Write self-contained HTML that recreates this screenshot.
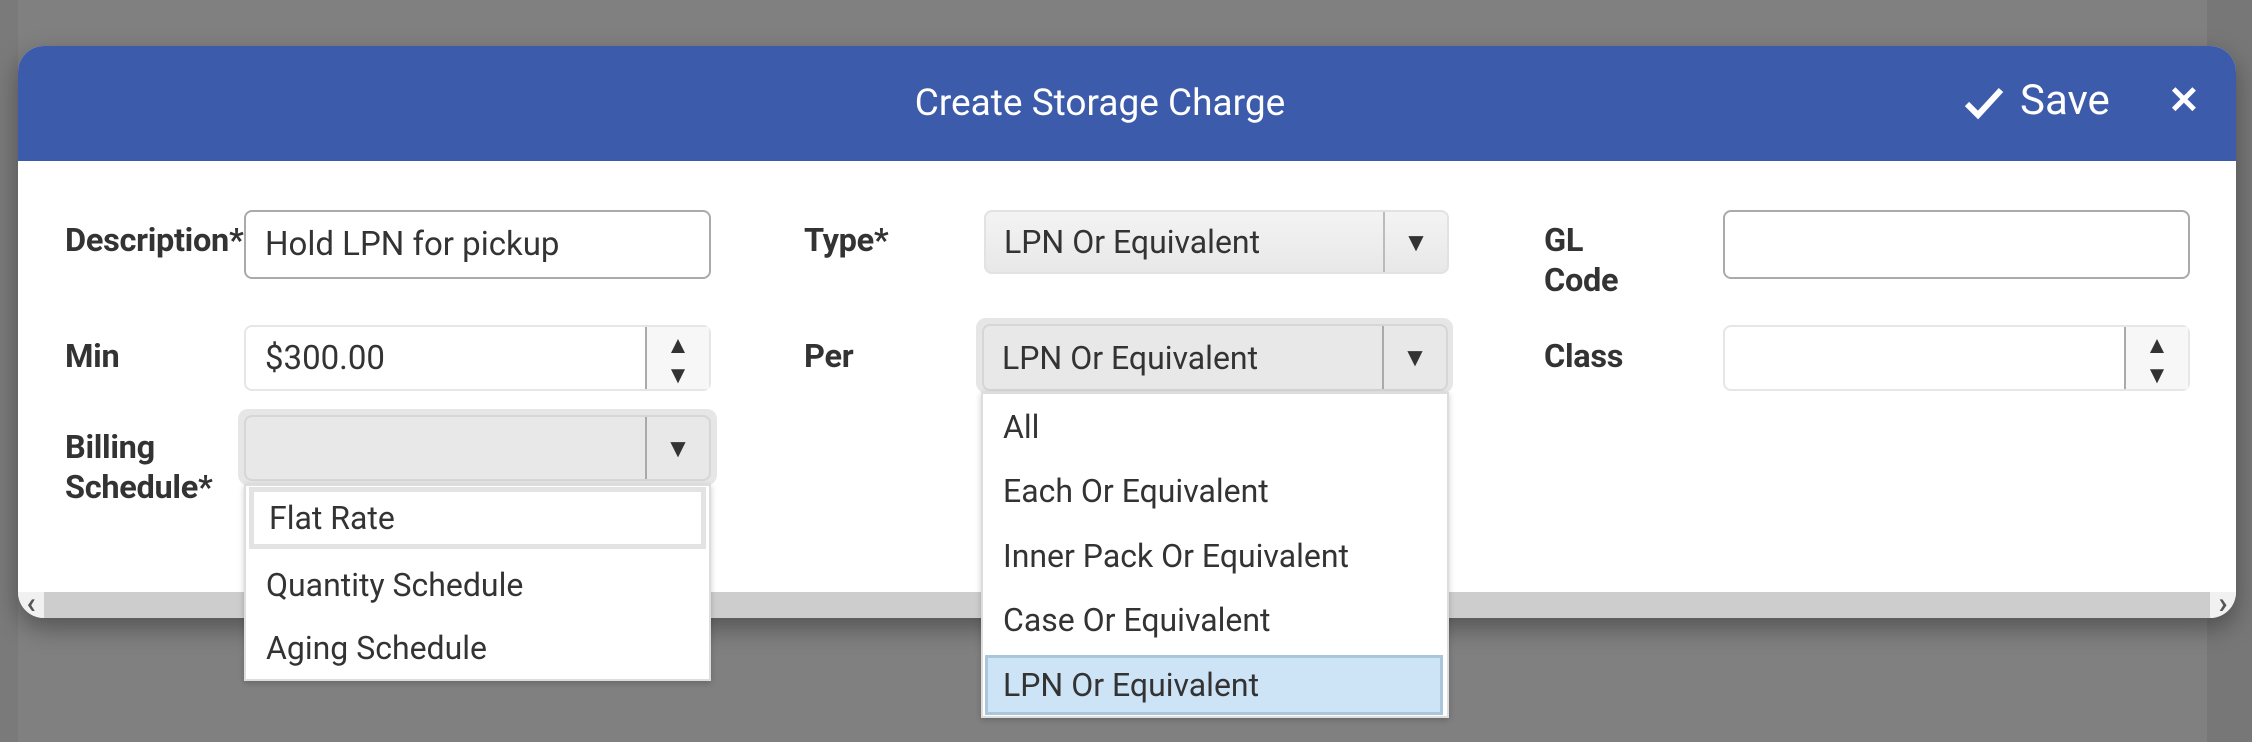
<!DOCTYPE html>
<html><head><meta charset="utf-8"><style>
*{box-sizing:border-box;margin:0;padding:0}
body{width:2252px;height:742px;overflow:hidden;background:#808080;font-family:"Roboto","Liberation Sans",sans-serif;color:#333;position:relative}
.abs{position:absolute}
.strip{left:0;top:0;width:18px;height:742px;background:#7a7a7a}
.rstrip{left:2207px;top:0;width:45px;height:742px;background:#777}
.modal{left:18px;top:46px;width:2218px;height:572px;background:#fff;border-radius:26px;overflow:hidden;box-shadow:0 10px 25px rgba(0,0,0,.35)}
.hdr{left:0;top:0;width:2218px;height:115px;background:#3d5bab;color:#fff}
.lbl{font-weight:bold;font-size:32.5px;color:#333;line-height:40px;letter-spacing:-0.3px}
.inp{border:2px solid #aaa;border-radius:8px;background:#fff;font-size:33px;color:#333;padding-left:19px;display:flex;align-items:center}
.sel{border:2px solid #e2e2e2;border-radius:8px;background:linear-gradient(#f3f3f3,#e8e8e8);font-size:32px;color:#333;padding-left:18px;display:flex;align-items:center}
.arr{position:absolute;right:0;top:0;bottom:0;width:64px;border-left:2px solid #aaa;display:flex;align-items:center;justify-content:center;font-size:26px;color:#333}
.spin{position:absolute;right:0;top:0;bottom:0;width:64px;border-left:2px solid #aaa;font-size:24px;color:#333;text-align:center;line-height:30px;padding-top:3px}
.item{position:absolute;left:0;right:0;height:64px;font-size:32px;color:#333;padding-left:20px;display:flex;align-items:center}
</style></head><body>
<div class="abs strip"></div>
<div class="abs rstrip"></div>
<div class="abs modal">
 <div class="abs hdr">
  <div class="abs" style="left:-27px;width:2218px;top:36px;text-align:center;font-size:37px">Create Storage Charge</div>
  <svg class="abs" style="left:1946px;top:40px" width="40" height="34" viewBox="0 0 40 34"><path d="M3 18 L14 29 L37 4" fill="none" stroke="#fff" stroke-width="6"/></svg>
  <div class="abs" style="left:2002px;top:30px;font-size:42px">Save</div>
  <div class="abs" style="left:2150px;top:32px;font-size:38px;font-weight:bold">✕</div>
 </div>
 <div class="abs lbl" style="left:47px;top:174px">Description*</div>
 <div class="abs lbl" style="left:786px;top:174px">Type*</div>
 <div class="abs lbl" style="left:1526px;top:174px">GL<br>Code</div>
 <div class="abs lbl" style="left:47px;top:290px">Min</div>
 <div class="abs lbl" style="left:786px;top:290px">Per</div>
 <div class="abs lbl" style="left:1526px;top:290px">Class</div>
 <div class="abs lbl" style="left:47px;top:381px">Billing<br>Schedule*</div>

 <div class="abs inp" style="left:226px;top:164px;width:467px;height:69px">Hold LPN for pickup</div>
 <div class="abs sel" style="left:966px;top:164px;width:465px;height:64px">LPN Or Equivalent<div class="arr" style="border-left-color:#bbb">▼</div></div>
 <div class="abs inp" style="left:1705px;top:164px;width:467px;height:69px"></div>

 <div class="abs inp" style="left:226px;top:279px;width:467px;height:66px;border-color:#e6e6e6">$300.00<div class="spin" style="background:#f7f7f7">▲<br>▼</div></div>
 <div class="abs" style="left:958px;top:272px;width:477px;height:75px;border-radius:10px;background:#e6e6e6"></div>
 <div class="abs sel" style="left:964px;top:278px;width:466px;height:67px;border-color:#d6d6d6;background:#e8e8e8">LPN Or Equivalent<div class="arr">▼</div></div>
 <div class="abs inp" style="left:1705px;top:279px;width:467px;height:66px;border-color:#e6e6e6"><div class="spin" style="background:#f7f7f7">▲<br>▼</div></div>

 <div class="abs" style="left:220px;top:363px;width:479px;height:76px;border-radius:10px;background:#e6e6e6"></div>
 <div class="abs sel" style="left:226px;top:369px;width:467px;height:66px;border-color:#d6d6d6;background:#e8e8e8"><div class="arr">▼</div></div>

 <div class="abs" style="left:0;top:546px;width:2218px;height:26px;background:#cdcdcd"></div>
 <div class="abs" style="left:0;top:546px;width:26px;height:26px;background:#f1f1f1;color:#555;font-size:30px;text-align:center;line-height:24px;font-weight:bold">‹</div>
 <div class="abs" style="left:2192px;top:546px;width:26px;height:26px;background:#f1f1f1;color:#555;font-size:30px;text-align:center;line-height:24px;font-weight:bold">›</div>
</div>

<div class="abs" style="left:244px;top:484px;width:467px;height:197px;background:#fff;border:2px solid #ddd;box-shadow:0 2px 6px rgba(0,0,0,.2)">
 <div class="item" style="top:1px;left:3px;right:3px;height:62px;border:5px solid #e3e3e3;padding-left:15px">Flat Rate</div>
 <div class="item" style="top:67px">Quantity Schedule</div>
 <div class="item" style="top:130px">Aging Schedule</div>
</div>

<div class="abs" style="left:981px;top:392px;width:468px;height:326px;background:#fff;border:2px solid #ddd;box-shadow:0 2px 6px rgba(0,0,0,.2)">
 <div class="item" style="top:1px">All</div>
 <div class="item" style="top:65px">Each Or Equivalent</div>
 <div class="item" style="top:130px">Inner Pack Or Equivalent</div>
 <div class="item" style="top:194px">Case Or Equivalent</div>
 <div class="item" style="top:261px;left:2px;right:4px;height:60px;background:#cde3f6;border:3px solid #aac6db;padding-left:15px">LPN Or Equivalent</div>
</div>
</body></html>
